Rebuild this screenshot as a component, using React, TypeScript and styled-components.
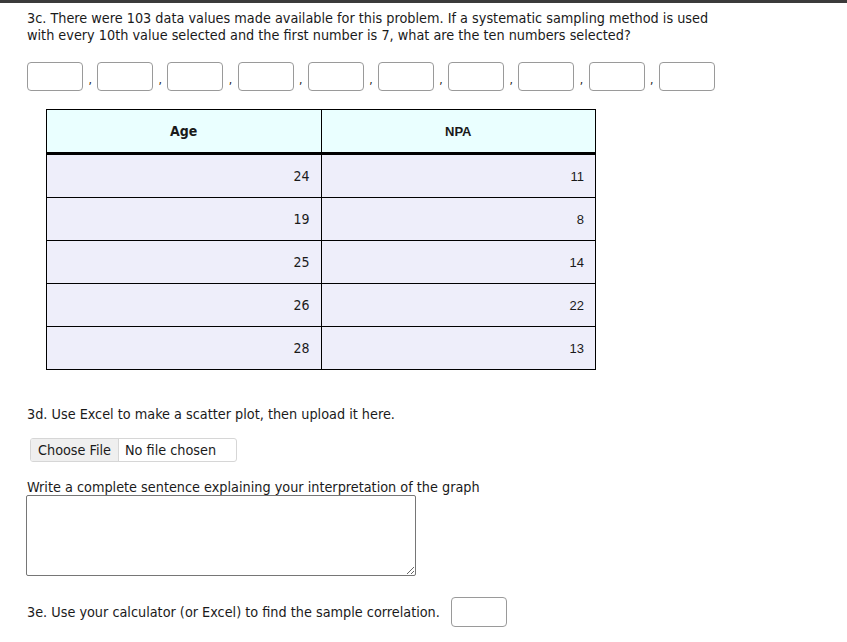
import React from "react";
import styled, { createGlobalStyle } from "styled-components";

const GlobalStyle = createGlobalStyle`
    body {
        margin: 0;
        background: #ffffff;
        font-family: "DejaVu Sans Condensed", "DejaVu Sans", sans-serif;
        font-size: 14.3px;
        color: #1a1a1a;
    }
`;

const Page = styled.div`
    border-top: 3px solid #3b3b3b;
    padding: 7px 27px 20px;
`;

const Prompt = styled.p`
    margin: 0;
    line-height: 17px;
    max-width: 700px;
`;

const AnswerRow = styled.div`
    display: flex;
    align-items: flex-end;
    margin-top: 18px;
`;

const Blank = styled.input<{ tall?: boolean }>`
    box-sizing: border-box;
    width: 56px;
    height: ${(p) => (p.tall ? 30 : 29)}px;
    border: 1px solid #9a9a9a;
    border-radius: 4px;
    background: #fff;
    margin: 0;
    flex: none;
`;

const Comma = styled.span`
    width: 14.2px;
    text-align: center;
    font-size: 12px;
    line-height: 14px;
    padding-bottom: 4px;
`;

const Table = styled.table`
    border-collapse: collapse;
    margin: 18px 0 0 19px;
    width: 550px;
`;

const Head = styled.th<{ arial?: boolean }>`
    background: #eaffff;
    border: 1px solid #000;
    border-bottom: 3px solid #000;
    height: 42px;
    padding: 0;
    width: 50%;
    font-weight: bold;
    font-size: ${(p) => (p.arial ? "13px" : "14px")};
    font-family: ${(p) => (p.arial ? '"Liberation Sans", Arial, sans-serif' : "inherit")};
`;

const Cell = styled.td<{ arial?: boolean }>`
    background: #eeeefa;
    border: 1px solid #000;
    height: 42px;
    text-align: right;
    padding: 0 11px 0 0;
    font-size: ${(p) => (p.arial ? "13px" : "14px")};
    font-family: ${(p) => (p.arial ? '"Liberation Sans", Arial, sans-serif' : "inherit")};
`;

const Section = styled.p`
    margin: 36px 0 0;
    line-height: 17px;
`;

const FileBox = styled.label`
    display: inline-flex;
    align-items: stretch;
    margin: 15px 0 0 3px;
    border: 1px solid #d6d6d6;
    border-radius: 3px;
    height: 24px;
    box-sizing: border-box;
    width: 207px;
    overflow: hidden;
    cursor: pointer;

    input {
        display: none;
    }
`;

const FileButton = styled.span`
    display: flex;
    align-items: center;
    padding: 0 7px;
    background: #efefef;
    border-right: 1px solid #d6d6d6;
`;

const FileName = styled.span`
    display: flex;
    align-items: center;
    padding: 0 6px;
`;

const Label = styled.div`
    margin-top: 18px;
    line-height: 15px;
`;

const Essay = styled.textarea`
    display: block;
    box-sizing: border-box;
    width: 390px;
    height: 81px;
    margin: 0 0 0 -1px;
    border: 1px solid #767676;
    border-radius: 2px;
`;

const Inline = styled.div`
    display: flex;
    align-items: center;
    gap: 11px;
    margin-top: 21px;
`;

const rows = [
    [24, 11],
    [19, 8],
    [25, 14],
    [26, 22],
    [28, 13],
];

export default function App() {
    return (
        <>
            <GlobalStyle />
            <Page>
                <Prompt>
                    3c. There were 103 data values made available for this problem. If a systematic sampling method is used
                    with every 10th value selected and the first number is 7, what are the ten numbers selected?
                </Prompt>
                <AnswerRow>
                    {Array.from({ length: 10 }).map((_, i) => (
                        <React.Fragment key={i}>
                            {i > 0 && <Comma>,</Comma>}
                            <Blank type="text" />
                        </React.Fragment>
                    ))}
                </AnswerRow>
                <Table>
                    <thead>
                        <tr>
                            <Head>Age</Head>
                            <Head arial>NPA</Head>
                        </tr>
                    </thead>
                    <tbody>
                        {rows.map(([age, npa], i) => (
                            <tr key={i}>
                                <Cell>{age}</Cell>
                                <Cell arial>{npa}</Cell>
                            </tr>
                        ))}
                    </tbody>
                </Table>
                <Section>3d. Use Excel to make a scatter plot, then upload it here.</Section>
                <FileBox>
                    <input type="file" />
                    <FileButton>Choose File</FileButton>
                    <FileName>No file chosen</FileName>
                </FileBox>
                <Label>Write a complete sentence explaining your interpretation of the graph</Label>
                <Essay />
                <Inline>
                    <span>3e. Use your calculator (or Excel) to find the sample correlation.</span>
                    <Blank type="text" tall />
                </Inline>
            </Page>
        </>
    );
}
